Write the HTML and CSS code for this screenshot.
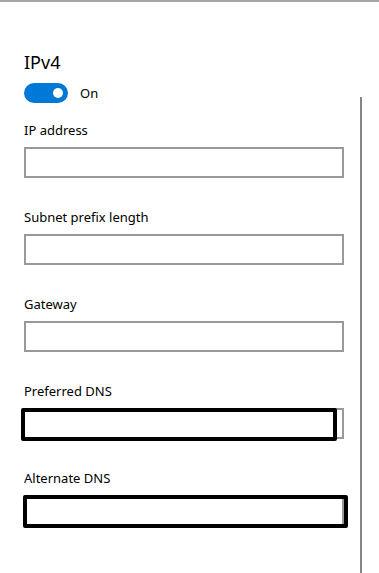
FILE: index.html
```html
<!DOCTYPE html>
<html lang="en">
<head>
  <meta charset="UTF-8">
  <meta name="viewport" content="width=device-width, initial-scale=1.0">
  <title>IP settings</title>
  <link rel="stylesheet" href="styles.css">
</head>
<body>
  <div class="window">
    <div class="panel">
      <h2 class="title">IPv4</h2>

      <!-- On/off switch -->
      <div class="toggle-row">
        <span class="toggle"><span class="knob"></span></span>
        <span class="toggle-label">On</span>
      </div>

      <div class="field">
        <label for="ip">IP address</label>
        <div class="box"><input type="text" id="ip"></div>
      </div>

      <div class="field">
        <label for="prefix">Subnet prefix length</label>
        <div class="box"><input type="text" id="prefix"></div>
      </div>

      <div class="field">
        <label for="gateway">Gateway</label>
        <div class="box"><input type="text" id="gateway"></div>
      </div>

      <div class="field">
        <label for="dns1">Preferred DNS</label>
        <div class="box">
          <input type="text" id="dns1">
          <span class="mark mark-preferred"></span>
        </div>
      </div>

      <div class="field">
        <label for="dns2">Alternate DNS</label>
        <div class="box">
          <input type="text" id="dns2">
          <span class="mark mark-alternate"></span>
        </div>
      </div>
    </div>

    <!-- Scroll bar -->
    <div class="scrollbar"><div class="thumb"></div></div>
  </div>
</body>
</html>
```

FILE: styles.css
```css
body {
  margin: 0;
  background-color: #ffffff;
  color: #000000;
  font-family: "Noto Sans", "Open Sans", sans-serif;
  font-size: 13px;
}

.window {
  display: flex;
  height: 571px;
  border-top: 2px solid #a6a6a6;
  overflow: hidden;
}

.panel {
  flex: 1;
  padding: 46px 0 0 24px;
}

.title {
  margin: 0;
  font-size: 18px;
  font-weight: normal;
  line-height: 28px;
}

/* Toggle switch */
.toggle-row {
  display: flex;
  align-items: center;
  gap: 12px;
  margin-top: 7px;
}

.toggle {
  display: flex;
  align-items: center;
  justify-content: flex-end;
  width: 44px;
  height: 20px;
  padding-right: 5px;
  box-sizing: border-box;
  border-radius: 10px;
  background-color: #0078d7;
}

.knob {
  width: 10px;
  height: 10px;
  border-radius: 50%;
  background-color: #ffffff;
}

.toggle-label {
  line-height: 20px;
}

/* Text fields */
.field {
  margin-top: 18px;
}

.field + .field {
  margin-top: 30px;
}

.field label {
  display: block;
  line-height: 18px;
  margin-bottom: 8px;
}

.box {
  position: relative;
  width: 320px;
  height: 31px;
}

.box input {
  display: block;
  width: 100%;
  height: 100%;
  margin: 0;
  padding: 0 8px;
  box-sizing: border-box;
  border: 2px solid #999999;
  background-color: #ffffff;
  outline: none;
}

/* Hand-drawn highlight rectangles */
.mark {
  position: absolute;
  box-sizing: border-box;
  border: 4px solid #000000;
  border-radius: 2px;
  background-color: #ffffff;
}

.mark-preferred {
  left: -3px;
  top: 0;
  width: 316px;
  height: 33px;
}

.mark-alternate {
  left: -1px;
  top: 0;
  width: 325px;
  height: 33px;
  background-color: transparent;
}

/* Scroll bar */
.scrollbar {
  width: 19px;
}

.thumb {
  width: 2px;
  height: 100%;
  margin-top: 95px;
  background-color: #858585;
}
```
